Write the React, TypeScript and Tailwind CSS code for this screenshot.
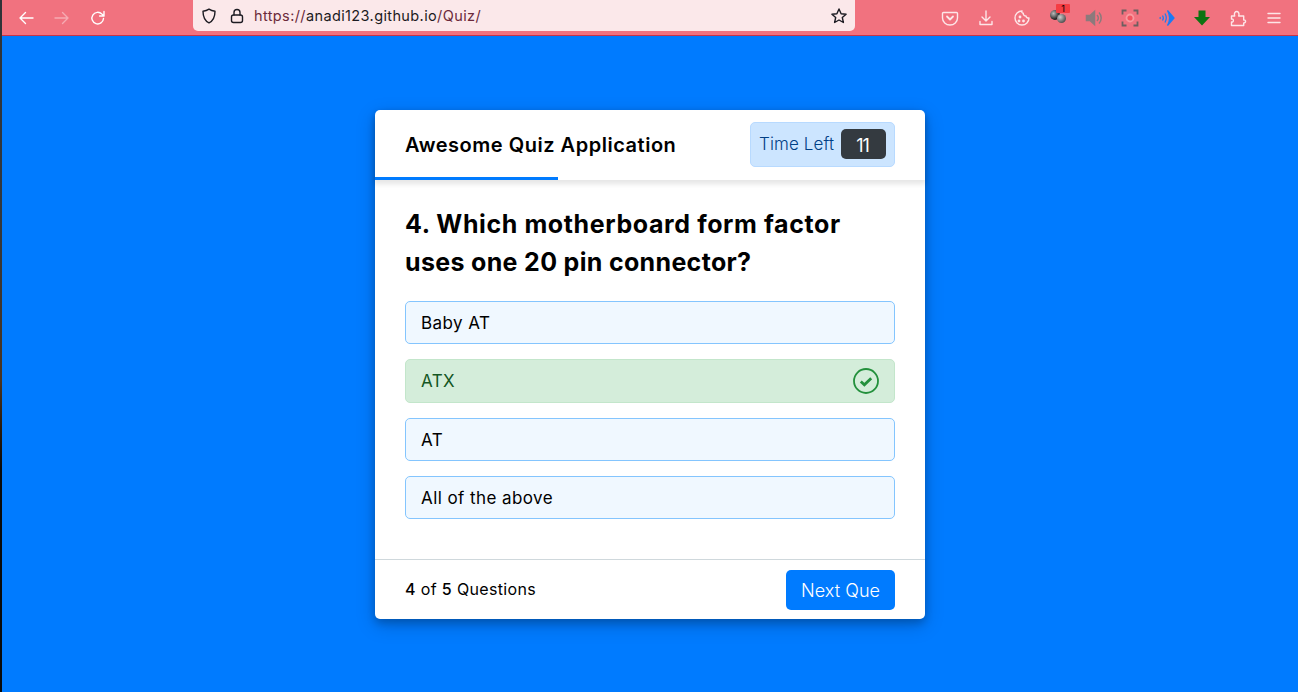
import React from "react";

const F = "font-['Inter','Open_Sans',sans-serif]";

function I({ children }: { children: React.ReactNode }) {
  return (
    <svg width="18" height="18" viewBox="0 0 18 18" fill="none" stroke="currentColor" strokeWidth="1.4" strokeLinecap="round" strokeLinejoin="round">
      {children}
    </svg>
  );
}

function Option({ text, correct }: { text: string; correct?: boolean }) {
  return (
    <div
      className={
        "flex items-center justify-between rounded-[5px] border pl-[15px] pr-[15px] text-[17px] tracking-[0.42px] " +
        (correct
          ? "h-[44px] border-[#c3e6cb] bg-[#d4edda] pt-[1px] text-[#155724]"
          : "h-[43px] border-[#84c5fe] bg-[aliceblue] pt-[2px] text-black")
      }
    >
      <span>{text}</span>
      {correct && (
        <svg width="26" height="26" viewBox="0 0 26 26" fill="none" className="-mt-[1px]">
          <circle cx="13" cy="13" r="12" stroke="#23903c" strokeWidth="1.8" />
          <path d="M7.800 13.400l3.600 3.400 6.800-6.600" stroke="#23903c" strokeWidth="2.800" />
        </svg>
      )}
    </div>
  );
}

export default function App() {
  return (
    <div className={"flex h-[692px] w-[1298px] overflow-hidden bg-[#007bff] " + F}>
      <div className="w-[2px] shrink-0 bg-[linear-gradient(180deg,#2f3338_0%,#33383d_30%,#4a3420_55%,#2a1a0a_62%,#0a0a0a_68%,#0a0a0a_100%)]" />
      <div className="flex min-w-0 flex-1 flex-col">
        <div className="flex h-[36px] shrink-0 items-start border-b border-[#c7344a] bg-[#f1727f]">
          <div className="flex h-[35px] w-[191px] items-center gap-[18px] pl-[15px] text-white">
            <I>
              <path d="M16 9H3M8.500 3.500L3 9l5.500 5.500" />
            </I>
            <span className="opacity-40">
              <I>
                <path d="M2 9h13M9.500 3.500L15 9l-5.500 5.500" />
              </I>
            </span>
            <I>
              <path d="M14.500 9.500a5.800 5.800 0 1 1-1.600-4.400L15 7M15 2.500V7h-4.400" />
            </I>
          </div>
          <div className="flex h-[31px] w-[662px] items-center rounded-b-[5px] bg-[#fbe8ea] pl-[7px] pr-[7px] text-[14.5px] text-[#1c1b22]">
            <I>
              <path d="M9 2.200c2 1.300 4 1.800 6 2 0 5-1.500 9.500-6 11.600C4.500 13.700 3 9.200 3 4.200c2-.2 4-.7 6-2z" />
            </I>
            <span className="ml-[10px]">
              <I>
                <rect x="3.500" y="8" width="11" height="7.500" rx="2" />
                <path d="M6 8V5.500a3 3 0 0 1 6 0V8" />
              </I>
            </span>
            <span className="ml-[8px] flex-1 tracking-[0.38px]">
              <span className="text-[#6b2a3a]">https://</span>anadi123.github.io<span className="text-[#6b2a3a]">/Quiz/</span>
            </span>
            <I>
              <path d="M9 2l2.100 4.700 5 .5-3.800 3.300 1.100 5L9 13l-4.400 2.500 1.100-5L1.900 7.200l5-.5z" />
            </I>
          </div>
          <div className="ml-[86px] flex h-[35px] items-center gap-[18px] text-[#fde6e8]">
            <I>
              <path d="M2.500 3.500h13a1 1 0 0 1 1 1V9a7.500 7 0 0 1-15 0V4.500a1 1 0 0 1 1-1z" />
              <path d="M6 7.500L9 10.500l3-3" strokeWidth="1.800" />
            </I>
            <I>
              <path d="M9 2v9.500M5 8l4 4 4-4M3 12.500V15.500h12v-3" />
            </I>
            <I>
              <path d="M9 2a7 7 0 1 0 7 7c-1.500.3-3-.7-3-2-1.500 0-3-1-2.700-2.700C9 4.300 8.500 3 9 2z" />
              <circle cx="7" cy="8" r=".7" fill="currentColor" />
              <circle cx="6" cy="12" r=".7" fill="currentColor" />
              <circle cx="10.500" cy="12" r=".7" fill="currentColor" />
            </I>
            <span className="relative h-[18px] w-[18px]">
              <span className="absolute left-[1px] top-[1px] h-[10px] w-[10px] rounded-full bg-[radial-gradient(circle_at_35%_35%,#bbb,#222_65%)]" />
              <span className="absolute left-[8px] top-[5px] h-[9px] w-[9px] rounded-full bg-[radial-gradient(circle_at_35%_35%,#ccc,#555_70%)]" />
              <span className="absolute left-[7px] top-[-5px] flex h-[9px] w-[14px] items-center justify-center rounded-[1px] bg-[#f53d43] text-[9px] leading-none text-black">1</span>
            </span>
            <svg width="18" height="18" viewBox="0 0 18 18" fill="none" stroke="#8c7a7c" strokeWidth="1.500">
              <path d="M1.500 6.500h3.500L9.500 2.500v13L5 11.500H1.500z" fill="#8c7a7c" />
              <path d="M12 6a4.500 4.500 0 0 1 0 6M14 3.500a8 8 0 0 1 0 11" />
            </svg>
            <svg width="18" height="18" viewBox="0 0 18 18" fill="none" stroke="#6e5f60" strokeWidth="1.800">
              <path d="M1.500 5.500V1.500h4M12.500 1.500h4v4M16.500 12.500v4h-4M5.500 16.500h-4v-4" />
              <circle cx="9" cy="9" r="3.500" fill="#f2545f" stroke="#f79aa0" />
            </svg>
            <svg width="18" height="18" viewBox="0 0 18 18" fill="none" stroke="#1a7bf5" strokeWidth="1.300">
              <path d="M10.500 1.500L17 9l-6.500 7.500C13 12 13 6 10.500 1.500z" fill="#1a7bf5" />
              <path d="M8 4.500c1.700 3 1.700 6 0 9M5.500 6.500c1 1.500 1 3.500 0 5M3 8c.4.700.4 1.300 0 2" />
            </svg>
            <svg width="18" height="18" viewBox="0 0 18 18">
              <path d="M5.500 1.500h7v6.500H17l-8 8.500L1 8h4.500z" fill="#0d7311" />
            </svg>
            <I>
              <path d="M2.500 7h3.200c-1-3 .6-4.500 2-4.500s3 1.500 2 4.500h5v4c2.500-.5 2.500 3 0 3v2.500H2.500v-3.500c2.500.5 2.500-3.500 0-3z" />
            </I>
            <I>
              <path d="M3 4.500h12M3 9h12M3 13.500h12" />
            </I>
          </div>
        </div>

        <div className="flex min-h-0 flex-1 items-center justify-center pb-[1px] pt-[2px]">
          <div className="flex h-[509px] w-[550px] flex-col rounded-[5px] bg-white shadow-[0_4px_8px_0_rgba(0,0,0,0.2),0_6px_20px_0_rgba(0,0,0,0.19)]">
            <header className="relative flex h-[70px] shrink-0 items-center justify-between rounded-t-[5px] pl-[30px] pr-[30px] shadow-[0_3px_5px_1px_rgba(0,0,0,0.1)]">
              <div className="text-[20px] font-semibold tracking-[0.52px] text-black">Awesome Quiz Application</div>
              <div className="mb-[2px] flex h-[45px] w-[145px] items-center justify-between rounded-[5px] border border-[#b8daff] bg-[#cce5ff] pl-[8px] pr-[8px] text-[#004085]">
                <span className="pt-[2px] text-[17px] font-[350] tracking-[0.1px]">Time Left</span>
                <span className="flex h-[30px] w-[45px] items-center justify-center rounded-[5px] bg-[#343a40] pr-[2px] pt-[2px] text-[18px] font-normal tracking-[-1px] text-white">11</span>
              </div>
              <div className="absolute bottom-0 left-0 h-[3px] w-[183px] bg-[#007bff]" />
            </header>

            <section className="flex flex-1 flex-col px-[30px] pt-[26px]">
              <div className="text-[25px] font-bold leading-[37.5px] tracking-[0.6px] text-black">
                4. Which motherboard form factor <span className="tracking-[0.33px]">uses one 20 pin connector?</span>
              </div>
              <div className="mt-[20px] flex flex-col gap-[15px]">
                <Option text="Baby AT" />
                <Option text="ATX" correct />
                <Option text="AT" />
                <Option text="All of the above" />
              </div>
            </section>

            <footer className="flex h-[60px] shrink-0 items-center justify-between border-t border-[#cfd8dc] pl-[30px] pr-[30px]">
              <div className="pb-[2px] text-[16px] tracking-[0.35px] text-black">
                <span className="font-medium">4</span> of <span className="font-medium">5</span> Questions
              </div>
              <button className="flex h-[40px] w-[109px] items-center justify-center rounded-[5px] bg-[#007bff] pt-[1px] text-[18px] font-[350] tracking-[0.05px] text-white">
                Next Que
              </button>
            </footer>
          </div>
        </div>
      </div>
    </div>
  );
}
